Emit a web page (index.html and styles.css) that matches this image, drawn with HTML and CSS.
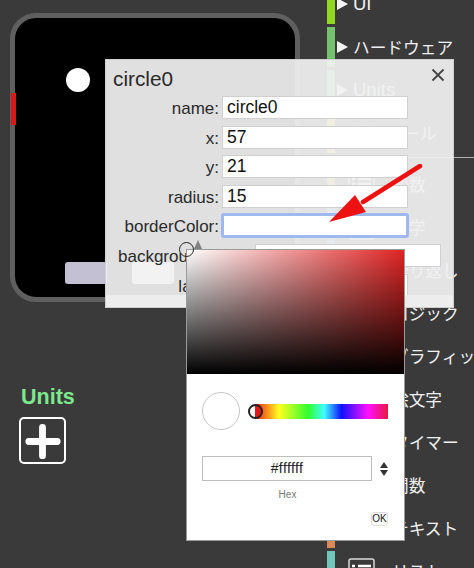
FILE: index.html
```html
<!DOCTYPE html>
<html lang="ja">
<head>
<meta charset="utf-8">
<title>circle0</title>
<link rel="stylesheet" href="styles.css">
</head>
<body>
<svg class="defs" width="0" height="0" aria-hidden="true">
  <symbol id="block-icon" viewBox="0 0 27 26">
    <rect x="1" y="1" width="25" height="24" rx="2" fill="none" stroke="#d8d8d8" stroke-width="1.500"/>
    <path d="M4 8H7M10 8H23M4 13H7M10 13H23M4 18H7M10 18H23" stroke="#fff" stroke-width="2.500"/>
  </symbol>
</svg>
<div class="stage">
  <main class="workspace">
    <div class="device">
      <span class="led"></span>
      <span class="dot"></span>
      <div class="device-buttons">
        <span class="dev-btn dev-btn-a"></span>
        <span class="dev-btn dev-btn-b"></span>
      </div>
    </div>
    <h2 class="units-title">Units</h2>
    <button class="add-btn" type="button" aria-label="add">
      <svg width="44" height="44" viewBox="0 0 44 44"><path d="M22 8V37M8 22.500H37" stroke="#fff" stroke-width="7" stroke-linecap="round" fill="none"/></svg>
    </button>
  </main>

  <nav class="sidebar">
    <div class="item c-lime"><span class="tri"></span><span class="lat">UI</span></div>
    <div class="item c-green"><span class="tri"></span>ハードウェア</div>
    <div class="item c-teal"><span class="tri"></span><span class="lat">Units</span></div>
    <div class="item c-yellow"><span class="tri"></span>追加ツール</div>
    <div class="sep"></div>
    <div class="item c-gold"><svg class="block-icon"><use href="#block-icon"/></svg><span class="block-label">変数</span></div>
    <div class="item c-blue"><svg class="block-icon"><use href="#block-icon"/></svg><span class="block-label">数学</span></div>
    <div class="item c-lime"><svg class="block-icon"><use href="#block-icon"/></svg><span class="block-label">繰り返し</span></div>
    <div class="item c-cyan"><svg class="block-icon"><use href="#block-icon"/></svg><span class="block-label">ロジック</span></div>
    <div class="item c-purple"><svg class="block-icon"><use href="#block-icon"/></svg><span class="block-label">グラフィック</span></div>
    <div class="item c-blue"><svg class="block-icon"><use href="#block-icon"/></svg><span class="block-label">絵文字</span></div>
    <div class="item c-green"><svg class="block-icon"><use href="#block-icon"/></svg><span class="block-label">タイマー</span></div>
    <div class="item c-purple"><svg class="block-icon"><use href="#block-icon"/></svg><span class="block-label">関数</span></div>
    <div class="item c-orange"><svg class="block-icon"><use href="#block-icon"/></svg><span class="block-label">テキスト</span></div>
    <div class="item c-mint"><svg class="block-icon"><use href="#block-icon"/></svg><span class="block-label">リスト</span></div>
  </nav>

  <section class="dialog">
    <h3 class="dialog-title">circle0</h3>
    <svg class="close" width="14" height="14" viewBox="0 0 14 14"><path d="M1.500 1.500L12.500 12.500M12.500 1.500L1.500 12.500" stroke="#444" stroke-width="1.800" fill="none"/></svg>
    <div class="row"><label class="lbl">name:</label><input class="field" value="circle0"></div>
    <div class="row"><label class="lbl">x:</label><input class="field" value="57"></div>
    <div class="row"><label class="lbl">y:</label><input class="field" value="21"></div>
    <div class="row"><label class="lbl">radius:</label><input class="field" value="15"></div>
    <div class="row"><label class="lbl">borderColor:</label><input class="field focus" value=""></div>
    <div class="row"><label class="lbl">backgroundColor:</label><input class="field" value=""></div>
    <div class="row"><label class="lbl">label:</label><input class="field" value=""></div>
    <div class="dialog-foot"></div>
  </section>

  <span class="picker-caret"></span>
  <span class="picker-ring"></span>
  <section class="picker">
    <div class="sat"></div>
    <div class="picker-body">
      <div class="hue-row">
        <span class="swatch"></span>
        <div class="hue"><span class="hue-handle"></span></div>
      </div>
      <div class="hex-row">
        <div class="hex-input">#ffffff</div>
        <span class="spin"><i class="up"></i><i class="down"></i></span>
      </div>
      <div class="hex-label">Hex</div>
      <div class="ok-row"><button class="ok" type="button">OK</button></div>
    </div>
  </section>

  <svg class="arrow" width="110" height="70" viewBox="0 0 110 70">
    <path d="M91 2L34 38" stroke="#ee1111" stroke-width="4.500" stroke-linecap="round" fill="none"/>
    <path d="M0 58L26 31L37 48Z" fill="#ee1111"/>
  </svg>
</div>
</body>
</html>
```

FILE: styles.css
```css
* { box-sizing: border-box; }
html, body { margin: 0; padding: 0; }
body {
  width: 474px;
  height: 568px;
  background: #3a3a3a;
  overflow: hidden;
  font-family: "Liberation Sans", "Noto Sans CJK JP", sans-serif;
}
.defs { display: block; }
.stage {
  position: relative;
  width: 474px;
  height: 568px;
  overflow: hidden;
  display: flex;
  background: #3a3a3a;
}
.workspace {
  width: 327px;
  flex: none;
  padding: 13px 0 0 10px;
}
.device {
  position: relative;
  width: 290px;
  height: 289px;
  background: #000;
  border: 5px solid #5f5f5f;
  border-radius: 26px;
}
.led {
  position: absolute;
  left: -4px;
  top: 75px;
  width: 5px;
  height: 32px;
  background: #d81818;
}
.dot {
  position: absolute;
  left: 51px;
  top: 50px;
  width: 24px;
  height: 24px;
  border-radius: 50%;
  background: #fff;
}
.device-buttons {
  position: absolute;
  left: 50px;
  top: 244px;
  display: flex;
  gap: 25px;
}
.dev-btn { width: 42px; height: 22px; border-radius: 3px; }
.dev-btn-a { background: #c2c0d2; }
.dev-btn-b { background: #fff; }

.units-title {
  margin: 85px 0 0 11px;
  height: 20px;
  font-size: 21.500px;
  line-height: 20px;
  font-weight: bold;
  color: #7de88c;
}
.add-btn {
  display: flex;
  align-items: center;
  justify-content: center;
  margin: 10px 0 0 9px;
  padding: 0;
  width: 47px;
  height: 47px;
  background: transparent;
  border: 2px solid #fff;
  border-radius: 5px;
}

.sidebar {
  flex: none;
  width: 147px;
  margin-top: -16px;
  display: flex;
  flex-direction: column;
  color: #f0f0f0;
  font-size: 16.700px;
}
.item {
  flex: none;
  height: 40px;
  margin-bottom: 3px;
  padding-left: 10px;
  display: flex;
  align-items: center;
  gap: 5px;
  border-left: 8px solid #888;
  white-space: nowrap;
}
.lat { font-size: 18.500px; }
.tri {
  flex: none;
  width: 0;
  height: 0;
  border-left: 11px solid #f4f4f4;
  border-top: 6px solid transparent;
  border-bottom: 6px solid transparent;
  margin-left: -8px;
}
.sep { flex: none; height: 1px; margin: 1px 0 6px 8px; background: #b0b0b0; }
.block-icon { flex: none; width: 27px; height: 26px; margin-left: 3px; }
.block-label { margin-left: 12px; }
.c-lime { border-left-color: #93d820; }
.c-green { border-left-color: #74c26c; }
.c-teal { border-left-color: #6cc07c; }
.c-yellow { border-left-color: #e0d020; }
.c-gold { border-left-color: #d8b030; }
.c-blue { border-left-color: #5b80c0; }
.c-cyan { border-left-color: #4aa8c8; }
.c-purple { border-left-color: #8a60c0; }
.c-orange { border-left-color: #d98a58; }
.c-mint { border-left-color: #70c6b8; }

.dialog {
  position: absolute;
  left: 105px;
  top: 59px;
  width: 349px;
  height: 249px;
  padding: 0 0 0 12px;
  background: rgba(241, 241, 241, 0.93);
  border: 1px solid #cfcfcf;
  color: #2a2a2a;
}
.dialog-title {
  margin: 9px 0 8px -5px;
  height: 19px;
  font-size: 20.800px;
  line-height: 20px;
  font-weight: normal;
}
.close {
  position: absolute;
  right: 8px;
  top: 8px;
}
.row {
  display: flex;
  align-items: center;
  gap: 3px;
  height: 23px;
  margin-bottom: 6.600px;
}
.lbl {
  min-width: 101px;
  padding-top: 3px;
  text-align: right;
  font-size: 17px;
  white-space: nowrap;
}
.field {
  flex: none;
  width: 186px;
  height: 23px;
  padding: 0 4px;
  margin: 0;
  font: 17.500px "Liberation Sans", sans-serif;
  color: #111;
  background: #fff;
  border: 1px solid #d0d0d0;
  outline: none;
}
.focus {
  border: 2px solid #a0b8f0;
  box-shadow: 0 0 0 1px #a0b8f0;
  border-radius: 2px;
}
.dialog-foot {
  position: absolute;
  left: 0;
  right: 0;
  bottom: 0;
  height: 12px;
  background: #ededed;
}

.picker {
  position: absolute;
  left: 186px;
  top: 249px;
  width: 219px;
  height: 292px;
  background: #fff;
  border: 1px solid #9a9a9a;
  display: flex;
  flex-direction: column;
}
.sat {
  height: 124px;
  flex: none;
  background:
    linear-gradient(to top, #000, rgba(0, 0, 0, 0)),
    linear-gradient(to right, #fff, #e02424);
}
.picker-body { padding: 18px 16px 0 15px; }
.hue-row { display: flex; align-items: center; gap: 15px; height: 38px; }
.swatch {
  flex: none;
  width: 38px;
  height: 38px;
  border-radius: 50%;
  border: 1px solid #c8c8c8;
  background: #fff;
}
.hue {
  position: relative;
  width: 134px;
  height: 15px;
  background: linear-gradient(to right, #f01818, #ffff20 18%, #30ff30 40%, #40ffff 52%, #1010ff 65%, #ff10ff 85%, #e81840);
}
.hue-handle {
  position: absolute;
  left: -7px;
  top: 0;
  width: 15px;
  height: 15px;
  border-radius: 50%;
  border: 2px solid #222;
  background: linear-gradient(to right, #fff 50%, #e01818 50%);
}
.hex-row { display: flex; align-items: center; gap: 8px; margin-top: 26px; }
.hex-input {
  width: 171px;
  height: 25px;
  border: 1px solid #bdbdbd;
  text-align: center;
  font-size: 14px;
  letter-spacing: 0.400px;
  line-height: 23px;
  color: #222;
}
.spin { display: flex; flex-direction: column; gap: 2px; }
.spin i { width: 0; height: 0; border-left: 4px solid transparent; border-right: 4px solid transparent; }
.up { border-bottom: 6px solid #333; }
.down { border-top: 6px solid #333; }
.hex-label {
  width: 171px;
  margin-top: 8px;
  text-align: center;
  font-size: 10px;
  color: #777;
}
.ok-row { display: flex; justify-content: flex-end; margin-top: 12px; }
.ok {
  width: 17px;
  height: 14px;
  padding: 0;
  font: 10px "Liberation Sans", sans-serif;
  line-height: 12px;
  color: #222;
  background: #fafafa;
  border: 1px solid #ddd;
  border-radius: 3px;
}
.picker-caret {
  position: absolute;
  left: 194px;
  top: 240px;
  width: 0;
  height: 0;
  border-left: 4.500px solid transparent;
  border-right: 4.500px solid transparent;
  border-bottom: 9px solid #808080;
}
.picker-ring {
  position: absolute;
  left: 179px;
  top: 242px;
  width: 15px;
  height: 15px;
  border-radius: 50%;
  border: 1.500px solid #222;
  z-index: 2;
}
.arrow {
  position: absolute;
  left: 329px;
  top: 164px;
}
```
